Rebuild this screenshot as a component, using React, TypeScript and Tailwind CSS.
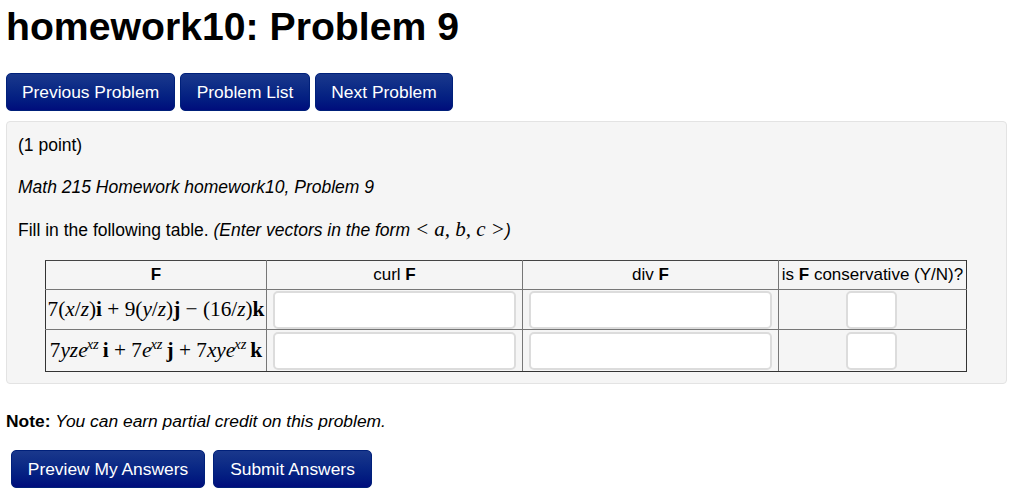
const sans = "font-['Liberation_Sans',Arial,sans-serif]";

function BlueButton({ label, className }: { label: string; className: string }) {
  return (
    <button
      className={`h-[38px] rounded-[5px] border border-[#00207a] bg-gradient-to-b from-[#1a388c] to-[#000c7c] text-center text-[17.4px] text-white ${className}`}
    >
      {label}
    </button>
  );
}

function Answer({ className }: { className: string }) {
  return (
    <input
      type="text"
      className={`h-[38px] rounded-[5px] border-2 border-[#dcdcdc] bg-white align-middle ${className}`}
    />
  );
}

function Sup() {
  return <sup className="relative top-[1px] mr-[4px] ml-[-1px] align-super text-[14.5px] leading-none italic">xz</sup>;
}

const cell = "border border-[#777777] p-0";
const mathCell = `${cell} font-['Liberation_Serif',serif] whitespace-nowrap`;

export default function App() {
  return (
    <div className={`h-[504px] w-[1024px] overflow-hidden bg-white pl-[6px] text-black ${sans}`}>
      <h1 className="pt-[5px] text-[39.2px] leading-[44px] font-bold">homework10: Problem 9</h1>

      <div className="mt-[24px] flex gap-[5px]">
        <BlueButton label="Previous Problem" className="w-[169px]" />
        <BlueButton label="Problem List" className="w-[130px]" />
        <BlueButton label="Next Problem" className="w-[138px]" />
      </div>

      <div className="mt-[10px] h-[263px] w-[1001px] rounded-[4px] border border-[#e3e3e3] bg-[#f5f5f5] pt-[2px] pl-[11px] text-[17.5px]">
        <p className="h-[42px] leading-[42px]">(1 point)</p>
        <p className="h-[42px] leading-[42px] italic">Math 215 Homework homework10, Problem 9</p>
        <p className="h-[42px] leading-[42px]">
          Fill in the following table.{" "}
          <i>
            (Enter vectors in the form{" "}
            <span className="font-['Liberation_Serif',serif] text-[21px]">&lt; a, b, c &gt;</span>)
          </i>
        </p>

        <table className="mt-[10px] ml-[27px] w-[921px] table-fixed border-collapse text-[17px] [&_tr:first-child_td]:border-t-[#444444] [&_tr:last-child_td]:border-b-[#333333] [&_td:first-child]:border-l-[#333333] [&_td:last-child]:border-r-[#333333]">
          <colgroup>
            <col className="w-[221px]" />
            <col className="w-[256px]" />
            <col className="w-[256px]" />
            <col className="w-[188px]" />
          </colgroup>
          <tbody>
            <tr className="h-[29px] text-center">
              <td className={`${cell} font-bold`}>F</td>
              <td className={cell}>
                curl <b>F</b>
              </td>
              <td className={cell}>
                div <b>F</b>
              </td>
              <td className={`${cell} whitespace-nowrap`}>
                is <b>F</b> conservative (Y/N)?
              </td>
            </tr>
            <tr className="h-[40px] text-center">
              <td className={`${mathCell} text-[21.3px]`}>
                7(<i>x</i>/<i>z</i>)<b>i</b> + 9(<i>y</i>/<i>z</i>)<b>j</b> − (16/<i>z</i>)<b>k</b>
              </td>
              <td className={cell}>
                <Answer className="w-[243px]" />
              </td>
              <td className={cell}>
                <Answer className="w-[243px]" />
              </td>
              <td className={cell}>
                <Answer className="mr-[2px] w-[51px]" />
              </td>
            </tr>
            <tr className="h-[42px] text-center">
              <td className={`${mathCell} text-[21.3px]`}>
                7<i>yze</i>
                <Sup />
                <b>i</b> + 7<i>e</i>
                <Sup />
                <b>j</b> + 7<i>xye</i>
                <Sup />
                <b>k</b>
              </td>
              <td className={cell}>
                <Answer className="w-[243px]" />
              </td>
              <td className={cell}>
                <Answer className="w-[243px]" />
              </td>
              <td className={cell}>
                <Answer className="mr-[2px] w-[51px]" />
              </td>
            </tr>
          </tbody>
        </table>
      </div>

      <p className="mt-[27px] h-[20px] text-[17.4px] leading-[20px]">
        <b>Note:</b> <i>You can earn partial credit on this problem.</i>
      </p>

      <div className="mt-[19px] ml-[5px] flex gap-[8px]">
        <BlueButton label="Preview My Answers" className="w-[194px]" />
        <BlueButton label="Submit Answers" className="w-[159px]" />
      </div>
    </div>
  );
}
